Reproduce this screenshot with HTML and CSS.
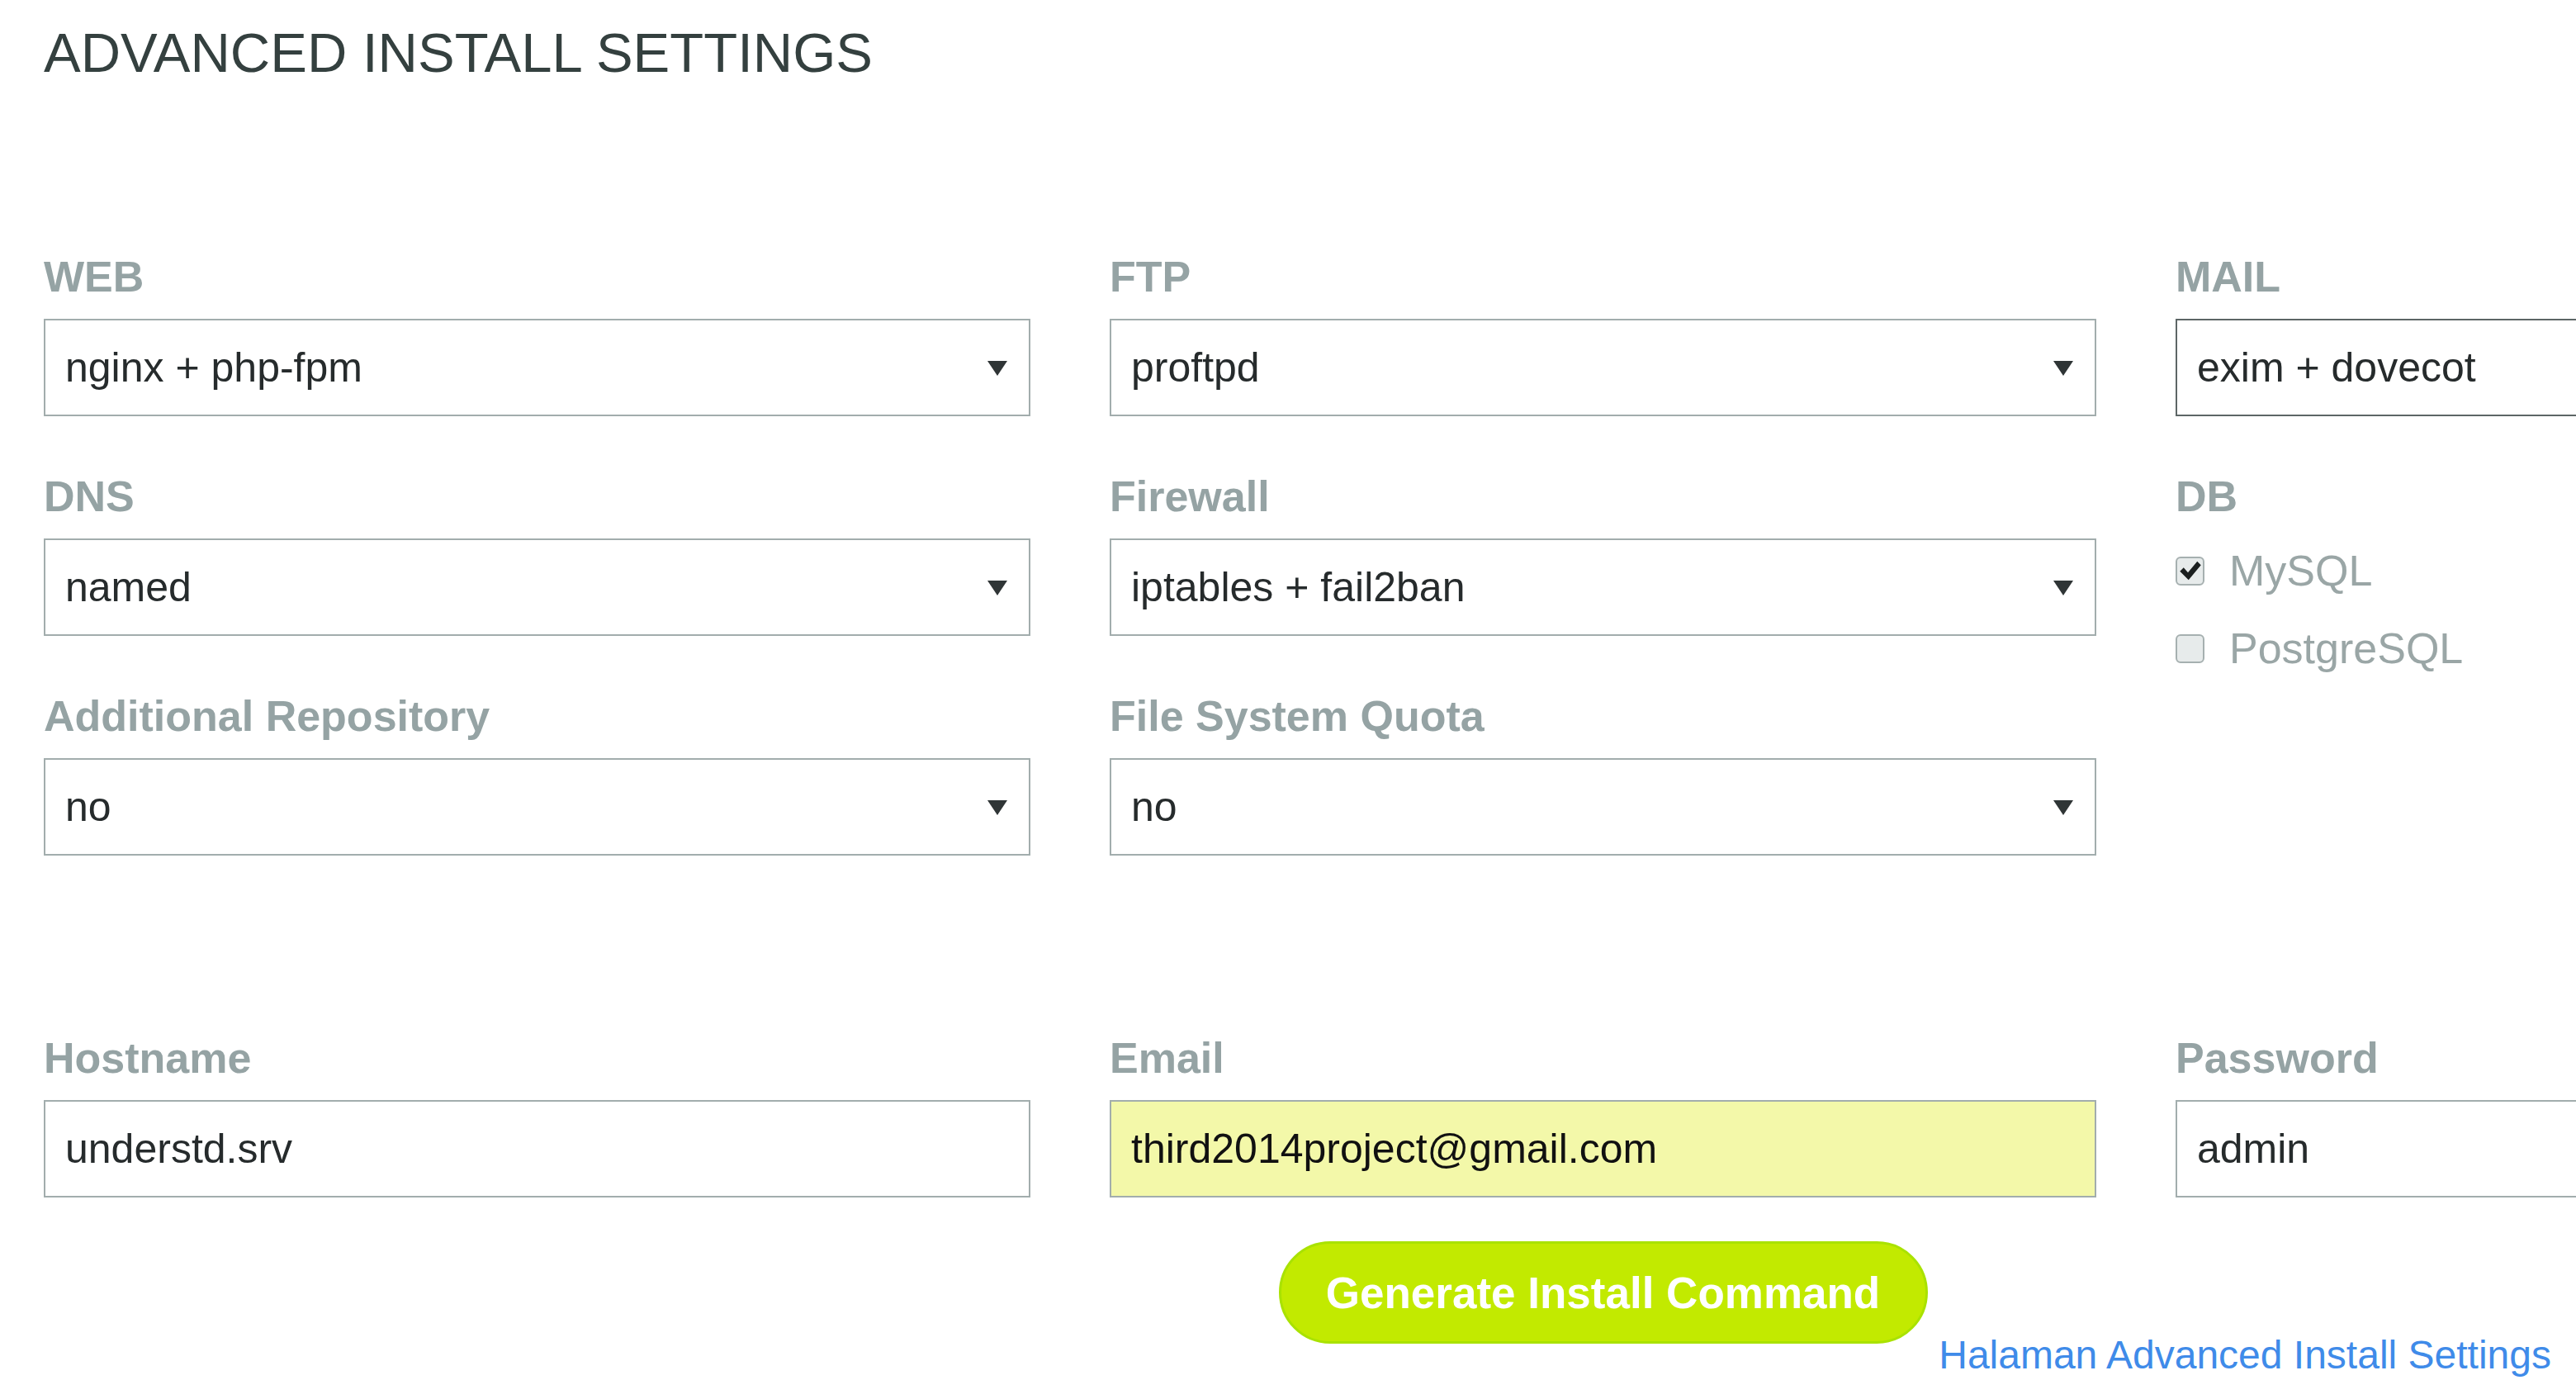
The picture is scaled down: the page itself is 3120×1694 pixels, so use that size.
FILE: index.html
```html
<!DOCTYPE html>
<html lang="en">

<head>
  <meta charset="UTF-8">
  <meta name="viewport" content="width=device-width, initial-scale=1.0">
  <title>Advanced Install Settings</title>
  <link rel="stylesheet" href="styles.css">
</head>

<body>
  <div class="page">
    <h1>ADVANCED INSTALL SETTINGS</h1>

    <div class="grid services">
      <div class="field">
        <label class="label">WEB</label>
        <div class="select">
          <select>
            <option>nginx + php-fpm</option>
          </select>
        </div>
      </div>

      <div class="field">
        <label class="label">FTP</label>
        <div class="select">
          <select>
            <option>proftpd</option>
          </select>
        </div>
      </div>

      <div class="field">
        <label class="label">MAIL</label>
        <div class="select focused">
          <select>
            <option>exim + dovecot</option>
          </select>
        </div>
      </div>

      <div class="field">
        <label class="label">DNS</label>
        <div class="select">
          <select>
            <option>named</option>
          </select>
        </div>
      </div>

      <div class="field">
        <label class="label">Firewall</label>
        <div class="select">
          <select>
            <option>iptables + fail2ban</option>
          </select>
        </div>
      </div>

      <div class="field db">
        <label class="label">DB</label>
        <div class="checks">
          <label class="check">
            <span class="box">
              <svg viewBox="0 0 20 20" width="30" height="30">
                <path d="M1.5 10.5 L4.5 7.5 L8 11.5 L15.5 2.5 L18.5 5.5 L8.5 17.5 Z" fill="#1b1f1f"/>
              </svg>
            </span>
            MySQL
          </label>
          <label class="check">
            <span class="box"></span>
            PostgreSQL
          </label>
        </div>
      </div>

      <div class="field">
        <label class="label">Additional Repository</label>
        <div class="select">
          <select>
            <option>no</option>
          </select>
        </div>
      </div>

      <div class="field">
        <label class="label">File System Quota</label>
        <div class="select">
          <select>
            <option>no</option>
          </select>
        </div>
      </div>
    </div>

    <div class="grid account">
      <div class="field">
        <label class="label">Hostname</label>
        <input class="input" type="text" value="understd.srv">
      </div>

      <div class="field">
        <label class="label">Email</label>
        <input class="input autofill" type="text" value="third2014project@gmail.com">
      </div>

      <div class="field">
        <label class="label">Password</label>
        <input class="input" type="text" value="admin">
      </div>

      <div class="actions">
        <button class="generate" type="button">Generate Install Command</button>
      </div>
    </div>

    <p class="caption">Halaman Advanced Install Settings</p>
  </div>
</body>

</html>
```

FILE: styles.css
```css
html,
body {
  margin: 0;
  overflow: hidden;
  background: #ffffff;
}

.page {
  position: relative;
  width: 3120px;
  height: 1694px;
  overflow: hidden;
  padding: 31px 0 0 53px;
  box-sizing: border-box;
  font-family: "Liberation Sans", Arial, sans-serif;
}

h1 {
  margin: 0;
  font-size: 67px;
  line-height: 66px;
  font-weight: normal;
  color: #34403f;
}

.grid {
  display: grid;
  grid-template-columns: repeat(3, 1195px);
  column-gap: 96px;
  row-gap: 71px;
}

.services {
  margin-top: 212px;
}

.account {
  margin-top: 219px;
}

.field {
  display: flex;
  flex-direction: column;
}

.label {
  font-size: 52px;
  line-height: 52px;
  font-weight: bold;
  color: #95a3a4;
  margin-bottom: 25px;
}

.select {
  position: relative;
}

.select select,
.input {
  display: block;
  width: 100%;
  height: 118px;
  box-sizing: border-box;
  margin: 0;
  padding: 0 24px;
  border: 2px solid #a2adad;
  border-radius: 0;
  background: #ffffff;
  font-family: "Liberation Sans", Arial, sans-serif;
  font-size: 50px;
  color: #262b2c;
  outline: none;
  appearance: none;
  -webkit-appearance: none;
}

.select::after {
  content: "";
  position: absolute;
  right: 28px;
  top: 51px;
  border-left: 12px solid transparent;
  border-right: 12px solid transparent;
  border-top: 18px solid #2f3536;
  pointer-events: none;
}

.select.focused select {
  border-color: #5d6666;
}

.input.autofill {
  background: #f3f8a9;
  color: #111111;
}

.db {
  grid-row: span 2;
}

.checks {
  display: flex;
  flex-direction: column;
  gap: 34px;
  margin-top: 9px;
}

.check {
  display: flex;
  align-items: center;
  gap: 30px;
  height: 60px;
  font-size: 52px;
  color: #9aa6a6;
}

.box {
  display: flex;
  align-items: center;
  justify-content: center;
  width: 35px;
  height: 35px;
  box-sizing: border-box;
  border: 2px solid #a6b0b0;
  border-radius: 6px;
  background: #e7ebeb;
}

.actions {
  grid-column: 1 / -1;
  display: flex;
  justify-content: center;
  margin-top: -18px;
}

.generate {
  width: 786px;
  height: 124px;
  border: 3px solid #a9e200;
  border-radius: 62px;
  background: #c2ea00;
  color: #ffffff;
  font-family: "Liberation Sans", Arial, sans-serif;
  font-size: 53px;
  font-weight: bold;
  cursor: pointer;
}

.caption {
  position: absolute;
  right: 30px;
  bottom: 29px;
  margin: 0;
  font-size: 48px;
  line-height: 48px;
  color: #3f8be9;
}
```
